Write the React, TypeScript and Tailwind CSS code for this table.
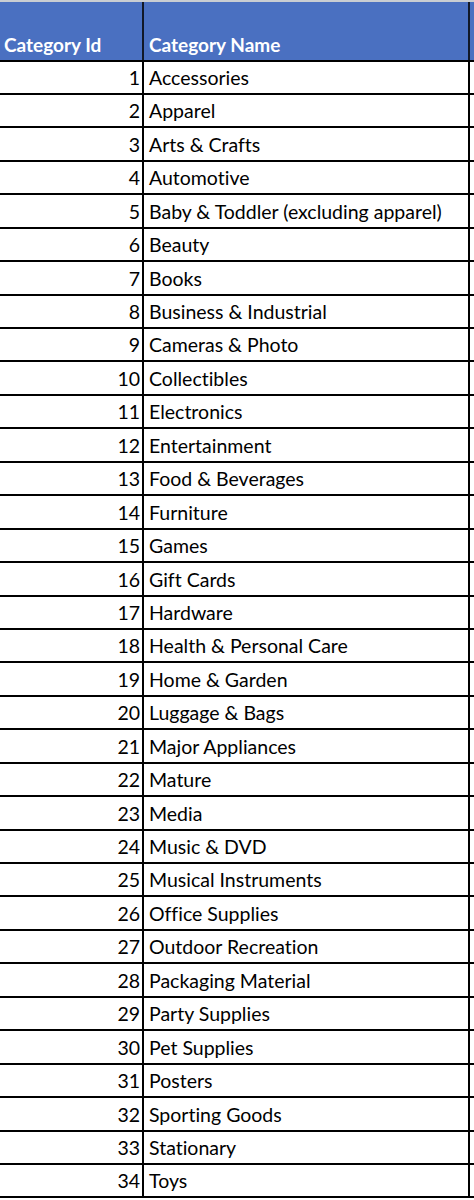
import React from 'react';

const categories = [
  'Accessories',
  'Apparel',
  'Arts & Crafts',
  'Automotive',
  'Baby & Toddler (excluding apparel)',
  'Beauty',
  'Books',
  'Business & Industrial',
  'Cameras & Photo',
  'Collectibles',
  'Electronics',
  'Entertainment',
  'Food & Beverages',
  'Furniture',
  'Games',
  'Gift Cards',
  'Hardware',
  'Health & Personal Care',
  'Home & Garden',
  'Luggage & Bags',
  'Major Appliances',
  'Mature',
  'Media',
  'Music & DVD',
  'Musical Instruments',
  'Office Supplies',
  'Outdoor Recreation',
  'Packaging Material',
  'Party Supplies',
  'Pet Supplies',
  'Posters',
  'Sporting Goods',
  'Stationary',
  'Toys',
];

export default function App() {
  return (
    <div className="w-[474px] h-[1200px] bg-white overflow-hidden font-['Lato',sans-serif] text-[19.5px] leading-none text-black [font-variant-ligatures:none]">
      {/* Top strip */}
      <div className="h-[2px] bg-[#c9cdd2]" />

      {/* Header */}
      <div className="grid grid-cols-[142px_2px_324px_2px_4px] h-[57.5px] bg-[#4a70c1] text-white font-bold text-[19px]">
        <div className="flex items-end pl-[4px] pb-[6px]">Category Id</div>
        <div className="bg-[#111827]" />
        <div className="flex items-end pl-[5px] pb-[6px]">Category Name</div>
        <div className="bg-[#111827]" />
        <div />
      </div>

      {/* Rows */}
      <div className="border-b-2 border-black">
        {categories.map((name, i) => (
          <div
            key={name}
            className="grid grid-cols-[142px_2px_324px_2px_4px] h-[33.44px] border-t-2 border-black"
          >
            <div className="flex items-center justify-end pr-[2px] pt-[1px]">{i + 1}</div>
            <div className="bg-black" />
            <div className="flex items-center pl-[5px] pt-[1px] whitespace-nowrap">{name}</div>
            <div className="bg-black" />
            <div />
          </div>
        ))}
      </div>
    </div>
  );
}
